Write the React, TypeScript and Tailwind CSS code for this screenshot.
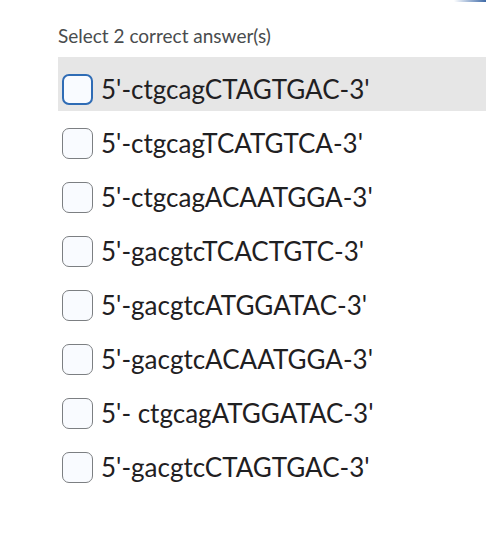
import React from "react";

const options = [
  "5'-ctgcagCTAGTGAC-3'",
  "5'-ctgcagTCATGTCA-3'",
  "5'-ctgcagACAATGGA-3'",
  "5'-gacgtcTCACTGTC-3'",
  "5'-gacgtcATGGATAC-3'",
  "5'-gacgtcACAATGGA-3'",
  "5'- ctgcagATGGATAC-3'",
  "5'-gacgtcCTAGTGAC-3'",
];

export default function App() {
  return (
    <div className="relative w-[486px] h-[536px] bg-white" style={{ fontFamily: "Lato, 'Noto Sans', sans-serif" }}>
      <div className="absolute right-0 top-0 h-[2px] w-[32px] bg-gradient-to-r from-white to-[#3f6aa6]" />
      <div className="pl-[58px] pt-[24px]">
        <div className="text-[19px] leading-[24px] text-[#494c4e]">Select 2 correct answer(s)</div>
        <div className="mt-[9px] flex flex-col">
          {options.map((o, i) => (
            <div
              key={i}
              className={`flex h-[54px] items-center pl-[4px] pt-[10px] ${i === 0 ? "bg-[#e6e6e6]" : ""}`}
            >
              <div
                className={`h-[31px] w-[31px] shrink-0 rounded-[7px] bg-[#f9fbff] ${
                  i === 0 ? "border-2 border-[#2f6cb5]" : "border border-[#7c7f82]"
                }`}
              />
              <span className="ml-[8px] text-[26px] leading-[30px] text-[#1f2022]">{o}</span>
            </div>
          ))}
        </div>
      </div>
    </div>
  );
}
